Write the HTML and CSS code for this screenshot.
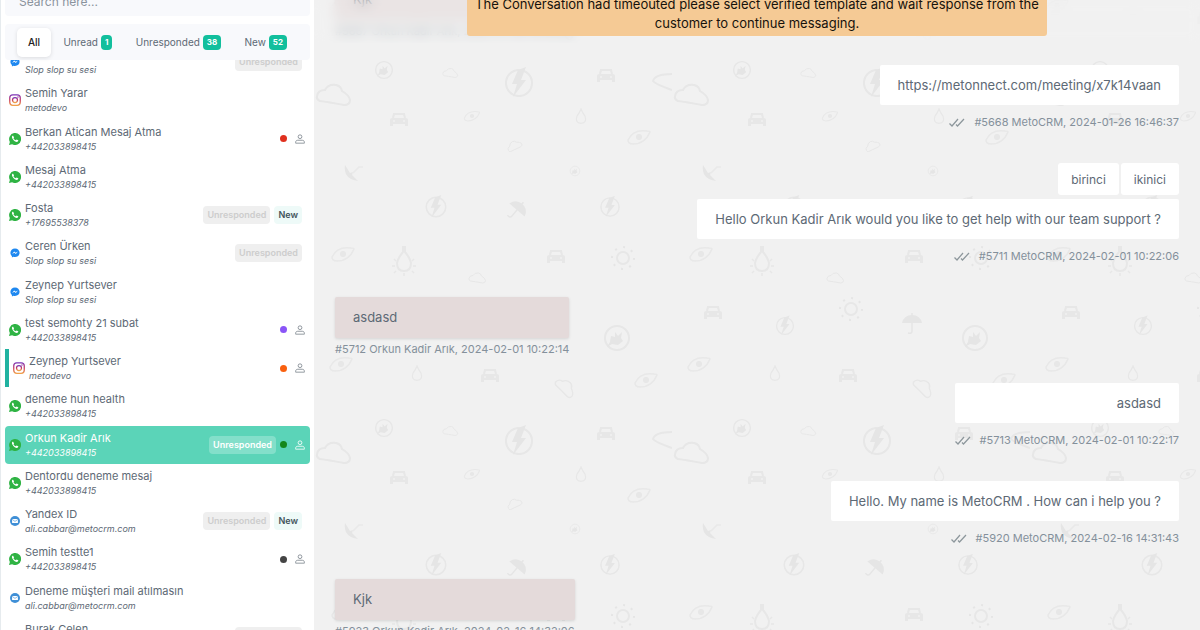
FILE: index.html
```html
<!DOCTYPE html>
<html lang="en">
<head>
  <meta charset="UTF-8">
  <meta name="viewport" content="width=device-width, initial-scale=1">
  <title>MetoCRM</title>
  <link rel="stylesheet" href="styles.css">
</head>
<body>

  <!-- Shared icons -->
  <svg class="sprite" aria-hidden="true">
    <defs>
      <linearGradient id="igFill" x1="0" y1="0" x2="0" y2="1">
        <stop offset="0" stop-color="#7b35b8"/>
        <stop offset="0.5" stop-color="#c8385f"/>
        <stop offset="1" stop-color="#f0a04b"/>
      </linearGradient>
      <symbol id="whatsapp" viewBox="0 0 24 24">
        <path d="M0 24l1.700-6.200A12 12 0 1 1 6.200 22.400z" fill="#2fb344"/>
        <path d="M8.300 5.700c-.5-.5-1.400-.3-1.800.1-3.400 3.800 6.700 15 11.200 11.200.9-.7 1-1.600.9-2.300l-3.500-1.700-1.600 1.700c-2.200-.8-3.700-2.300-4.600-4.200l1.200-1.500z" fill="#fff"/>
      </symbol>
      <symbol id="messenger" viewBox="0 0 24 24">
        <path d="M12 1C5.500 1 1 5.600 1 11.600c0 3.200 1.300 5.900 3.600 7.800V23l3.400-1.900c1.200.4 2.600.5 4 .5 6.500 0 11-4.400 11-10S18.500 1 12 1z" fill="#1e88f0"/>
        <path d="M5 14.500l5-6 3.500 3L19 8.500l-5 6-3.500-3z" fill="#fff"/>
      </symbol>
      <symbol id="instagram" viewBox="0 0 24 24">
        <g fill="none" stroke="url(#igFill)" stroke-width="2.500">
          <rect x="1.500" y="1.500" width="21" height="21" rx="6"/>
          <circle cx="12" cy="12" r="5"/>
        </g>
        <circle cx="18" cy="6" r="1.500" fill="#9a3aa0"/>
      </symbol>
      <symbol id="mail" viewBox="0 0 24 24">
        <circle cx="12" cy="12" r="12" fill="#3f8fd6"/>
        <rect x="5" y="7" width="14" height="10" rx="1" fill="#fff"/>
        <path d="M5 8l7 5 7-5" fill="none" stroke="#3f8fd6" stroke-width="1.500"/>
      </symbol>
      <symbol id="user" viewBox="0 0 24 24">
        <g fill="none" stroke="currentColor" stroke-width="2">
          <circle cx="12" cy="6.500" r="4.500"/>
          <path d="M1.500 22v-2c0-3 2-5 5-5h11c3 0 5 2 5 5v2z"/>
        </g>
      </symbol>
      <symbol id="checks" viewBox="0 0 32 18">
        <path d="M1 11l5 5L18 2M14 13l3 3L30 2" fill="none" stroke="currentColor" stroke-width="2.500"/>
      </symbol>

      <!-- Wallpaper shapes, centred on 0,0 -->
      <g id="car">
        <path d="M-6-2l1-4h10l1 4" fill="none" stroke="#e3e3e3" stroke-width="2"/>
        <path d="M-9 0q0-2 3-2H6q3 0 3 2v6H6V4H-6v2h-3z" fill="#e3e3e3"/>
        <path d="M-6 1h2M4 1h2" stroke="#f1f1f1" stroke-width="1.500"/>
      </g>
      <g id="eye">
        <path d="M-11 3Q-6-8 8-6q3 0 3 1Q6 7-6 7q-5 0-5-4z" fill="none" stroke="#e5e5e5" stroke-width="1.500"/>
        <circle r="3" fill="#e3e3e3"/>
      </g>
      <g id="cloud">
        <path d="M-16 1Q-15-5-8-5-5-11 3-10q5 1 6 6 7 4 8 9 0 5-6 5-16-3-24-4-4-2-3-5z" fill="none" stroke="#e3e3e3" stroke-width="2"/>
      </g>
      <g id="bolt">
        <circle r="13" fill="none" stroke="#e3e3e3" stroke-width="2"/>
        <path d="M7-16L-1-13-7 1h5l-4 13L7-3H2z" fill="#e1e1e1"/>
      </g>
      <g id="plug">
        <circle r="12" fill="none" stroke="#e3e3e3" stroke-width="2"/>
        <path d="M-6-2l4 1v-5l3 4 4-4-1 6 2 3-5 4-6-1-5 3 3-5z" fill="#e1e1e1"/>
      </g>
      <g id="sun">
        <circle r="6" fill="none" stroke="#e4e4e4" stroke-width="2"/>
        <circle r="11" fill="none" stroke="#e1e1e1" stroke-width="2" stroke-dasharray="2 6.600"/>
      </g>
      <g id="drop">
        <path d="M0-10q2 5 5 9 3 8-5 9-8-1-5-9 3-4 5-9z" fill="none" stroke="#e4e4e4" stroke-width="1.500"/>
      </g>
      <g id="lamp">
        <path d="M-1-15h2v5q5 6 6 11 0 8-7 8-7 0-7-8 1-5 6-11z" fill="none" stroke="#e4e4e4" stroke-width="2"/>
        <path d="M-12 4h3M9 4h3M-10 11l2-2M10 11l-2-2M0 11v3M-10-3l2 2M10-3l-2 2" stroke="#e4e4e4" stroke-width="1.500"/>
      </g>
      <g id="umbrella">
        <path d="M-10 0Q-8-8 0-8t10 8z" fill="#e1e1e1"/>
        <path d="M0-10V8q0 3-4 2" fill="none" stroke="#e1e1e1" stroke-width="1.500"/>
      </g>
      <g id="dish">
        <path d="M-8-8Q-10 6 5 8L-1 2 0-1-3 0z" fill="#e1e1e1"/>
        <path d="M0 0l6-6 4 0" fill="none" stroke="#e6e6e6" stroke-width="1.500"/>
      </g>

      <pattern id="doodles" width="358" height="358" patternUnits="userSpaceOnUse" y="43">
        <use href="#plug" transform="translate(70 27) scale(.7)"/>
        <use href="#cloud" transform="translate(136 30) scale(.45)"/>
        <use href="#bolt" transform="translate(205 40)"/>
        <use href="#car" transform="translate(292 33)"/>
        <path d="M358 31q-17 0-19 7 2 3 19 9" fill="none" stroke="#e4e4e4" stroke-width="2"/>
        <use href="#cloud" transform="translate(19 52)"/>
        <use href="#car" transform="translate(85 77)"/>
        <use href="#eye" transform="translate(158 73) scale(.7)"/>
        <use href="#drop" transform="translate(267 74) scale(.8)"/>
        <use href="#eye" transform="translate(325 94)"/>
        <use href="#cloud" transform="translate(200 103) rotate(-35) scale(.45)"/>
        <use href="#dish" transform="translate(39 130)"/>
        <use href="#plug" transform="translate(261 128) scale(.4)"/>
        <use href="#bolt" transform="translate(122 164) scale(.75)"/>
        <use href="#umbrella" transform="translate(203 167) rotate(40)"/>
        <use href="#bolt" transform="translate(296 164) scale(.7)"/>
        <use href="#eye" transform="translate(29 211)"/>
        <use href="#lamp" transform="translate(90 219)"/>
        <use href="#car" transform="translate(242 214)"/>
        <use href="#sun" transform="translate(309 215)"/>
        <use href="#cloud" transform="translate(163 235) scale(.5)"/>
        <use href="#car" transform="translate(41 270)"/>
        <use href="#sun" transform="translate(179 266)"/>
        <use href="#bolt" transform="translate(113 283) scale(.65)"/>
        <use href="#umbrella" transform="translate(240 280)"/>
        <use href="#plug" transform="translate(303 295)"/>
        <use href="#eye" transform="translate(27 321)"/>
        <use href="#drop" transform="translate(103 331) scale(.8)"/>
        <use href="#car" transform="translate(176 333)"/>
        <use href="#cloud" transform="translate(251 344) rotate(35) scale(.65)"/>
        <use href="#eye" transform="translate(332 337)"/>
      </pattern>
    </defs>
  </svg>

  <div class="app">
    <aside class="sidebar">
      <input class="search" type="search" placeholder="Search here..." aria-label="Search">

      <nav class="tabs">
        <button class="tab active" type="button">All</button>
        <button class="tab" type="button">Unread <span class="count">1</span></button>
        <button class="tab" type="button">Unresponded <span class="count">38</span></button>
        <button class="tab" type="button">New <span class="count">52</span></button>
      </nav>

      <div class="list-wrap">
        <ul class="contacts">
          <li><a class="contact" href="#">
            <svg class="channel small"><use href="#messenger"/></svg>
            <span class="who"><span class="name">&nbsp;</span><em>Slop slop su sesi</em></span>
            <span class="tag">Unresponded</span>
          </a></li>
          <li><a class="contact" href="#">
            <svg class="channel"><use href="#instagram"/></svg>
            <span class="who"><span class="name">Semih Yarar</span><em>metodevo</em></span>
          </a></li>
          <li><a class="contact" href="#">
            <svg class="channel"><use href="#whatsapp"/></svg>
            <span class="who"><span class="name">Berkan Atican Mesaj Atma</span><em>+442033898415</em></span>
            <span class="dot red"></span><svg class="user"><use href="#user"/></svg>
          </a></li>
          <li><a class="contact" href="#">
            <svg class="channel"><use href="#whatsapp"/></svg>
            <span class="who"><span class="name">Mesaj Atma</span><em>+442033898415</em></span>
          </a></li>
          <li><a class="contact" href="#">
            <svg class="channel"><use href="#whatsapp"/></svg>
            <span class="who"><span class="name">Fosta</span><em>+17695538378</em></span>
            <span class="tag">Unresponded</span><span class="tag new">New</span>
          </a></li>
          <li><a class="contact" href="#">
            <svg class="channel small"><use href="#messenger"/></svg>
            <span class="who"><span class="name">Ceren Ürken</span><em>Slop slop su sesi</em></span>
            <span class="tag">Unresponded</span>
          </a></li>
          <li><a class="contact" href="#">
            <svg class="channel small"><use href="#messenger"/></svg>
            <span class="who"><span class="name">Zeynep Yurtsever</span><em>Slop slop su sesi</em></span>
          </a></li>
          <li><a class="contact" href="#">
            <svg class="channel"><use href="#whatsapp"/></svg>
            <span class="who"><span class="name">test semohty 21 subat</span><em>+442033898415</em></span>
            <span class="dot purple"></span><svg class="user"><use href="#user"/></svg>
          </a></li>
          <li><a class="contact marked" href="#">
            <svg class="channel"><use href="#instagram"/></svg>
            <span class="who"><span class="name">Zeynep Yurtsever</span><em>metodevo</em></span>
            <span class="dot orange"></span><svg class="user"><use href="#user"/></svg>
          </a></li>
          <li><a class="contact" href="#">
            <svg class="channel"><use href="#whatsapp"/></svg>
            <span class="who"><span class="name">deneme hun health</span><em>+442033898415</em></span>
          </a></li>
          <li><a class="contact selected" href="#">
            <svg class="channel"><use href="#whatsapp"/></svg>
            <span class="who"><span class="name">Orkun Kadir Arık</span><em>+442033898415</em></span>
            <span class="tag">Unresponded</span><span class="dot green"></span><svg class="user"><use href="#user"/></svg>
          </a></li>
          <li><a class="contact" href="#">
            <svg class="channel"><use href="#whatsapp"/></svg>
            <span class="who"><span class="name">Dentordu deneme mesaj</span><em>+442033898415</em></span>
          </a></li>
          <li><a class="contact" href="#">
            <svg class="channel small"><use href="#mail"/></svg>
            <span class="who"><span class="name">Yandex ID</span><em>ali.cabbar@metocrm.com</em></span>
            <span class="tag">Unresponded</span><span class="tag new">New</span>
          </a></li>
          <li><a class="contact" href="#">
            <svg class="channel"><use href="#whatsapp"/></svg>
            <span class="who"><span class="name">Semih testte1</span><em>+442033898415</em></span>
            <span class="dot black"></span><svg class="user"><use href="#user"/></svg>
          </a></li>
          <li><a class="contact" href="#">
            <svg class="channel small"><use href="#mail"/></svg>
            <span class="who"><span class="name">Deneme müşteri mail atılmasın</span><em>ali.cabbar@metocrm.com</em></span>
          </a></li>
          <li><a class="contact" href="#">
            <span class="channel"></span>
            <span class="who"><span class="name">Burak Celen</span><em>&nbsp;</em></span>
            <span class="tag">Unresponded</span>
          </a></li>
        </ul>
      </div>
    </aside>

    <main class="chat">
      <svg class="wallpaper" aria-hidden="true"><rect width="100%" height="100%" fill="url(#doodles)"/></svg>

      <div class="messages">
        <div class="message in">
          <p class="bubble">Kjk</p>
          <p class="meta">#5667 Orkun Kadir Arık, 2024-01-26 16:46:06</p>
        </div>
        <div class="message out">
          <p class="bubble">https://metonnect.com/meeting/x7k14vaan</p>
          <p class="meta"><svg class="checks"><use href="#checks"/></svg>#5668 MetoCRM, 2024-01-26 16:46:37</p>
        </div>
        <div class="message out">
          <div class="replies">
            <button type="button">birinci</button>
            <button type="button">ikinici</button>
          </div>
          <p class="bubble">Hello Orkun Kadir Arık would you like to get help with our team support ?</p>
          <p class="meta"><svg class="checks"><use href="#checks"/></svg>#5711 MetoCRM, 2024-02-01 10:22:06</p>
        </div>
        <div class="message in">
          <p class="bubble">asdasd</p>
          <p class="meta">#5712 Orkun Kadir Arık, 2024-02-01 10:22:14</p>
        </div>
        <div class="message out">
          <p class="bubble">asdasd</p>
          <p class="meta"><svg class="checks"><use href="#checks"/></svg>#5713 MetoCRM, 2024-02-01 10:22:17</p>
        </div>
        <div class="message out">
          <p class="bubble">Hello. My name is MetoCRM . How can i help you ?</p>
          <p class="meta"><svg class="checks"><use href="#checks"/></svg>#5920 MetoCRM, 2024-02-16 14:31:43</p>
        </div>
        <div class="message in">
          <p class="bubble">Kjk</p>
          <p class="meta">#5923 Orkun Kadir Arık, 2024-02-16 14:32:06</p>
        </div>
      </div>

      <div class="topbar"></div>
    </main>
  </div>

  <div class="toast" role="alert">The Conversation had timeouted please select verified template and wait response from the customer to continue messaging.</div>

</body>
</html>
```
FILE: styles.css
```css
* {
  box-sizing: border-box;
}

body {
  margin: 0;
  font-family: Inter, "Liberation Sans", sans-serif;
  font-size: 13px;
  color: #5d6975;
  background-color: #fff;
}

button, input {
  font-family: inherit;
  border: none;
}

.sprite {
  position: absolute;
  width: 0;
  height: 0;
}

.app {
  display: flex;
  height: 100vh;
  overflow: hidden;
}

/* Sidebar */
.sidebar {
  display: flex;
  flex-direction: column;
  width: 314px;
  flex-shrink: 0;
  padding: 0 4px;
  border-left: 1px solid #e6ebee;
  background-color: #fff;
}

.search {
  height: 32px;
  flex-shrink: 0;
  margin: -16px 0 8px;
  padding: 2px 14px 0;
  border-radius: 4px;
  background-color: #f8f9fc;
  font-size: 12px;
}

.search::placeholder {
  color: #8a939d;
}

.tabs {
  display: flex;
  justify-content: space-between;
  align-items: center;
  flex-shrink: 0;
  height: 36px;
  padding: 0 12px;
  border-radius: 4px;
  background-color: #f8f9fc;
}

.tab {
  display: flex;
  align-items: center;
  gap: 3px;
  height: 29px;
  padding: 0 11px;
  border-radius: 5px;
  background: none;
  font-size: 10px;
  color: #5d6975;
  cursor: pointer;
}

.tab.active {
  background-color: #fff;
  color: #222;
  font-weight: 500;
  box-shadow: 0 1px 4px rgba(0, 0, 0, 0.12);
}

.count {
  padding: 0 4px;
  border-radius: 4px;
  background-color: #12bf9d;
  color: #fff;
  font-size: 8px;
  font-weight: 700;
  line-height: 15px;
}

.list-wrap {
  display: flex;
  flex: 1;
  min-height: 0;
  overflow: hidden;
}

/* The list is scrolled a little, so its first row is cut at the top */
.contacts {
  display: grid;
  grid-auto-rows: 1fr;
  flex: 1;
  list-style: none;
  margin: -17px 0 -25px;
  padding: 0;
}

.contact {
  display: flex;
  align-items: center;
  height: 100%;
  padding: 0 8px 0 4px;
  color: #5d6975;
  text-decoration: none;
}

.contact.marked {
  border-left: 4px solid #20b2a0;
}

.contact.selected {
  border-radius: 4px;
  background-color: #5bd4b8;
  color: #fff;
}

.channel {
  width: 12px;
  height: 12px;
  flex-shrink: 0;
}

.channel.small {
  width: 10px;
  height: 10px;
  margin: 0 1px;
}

.who {
  display: flex;
  flex-direction: column;
  flex: 1;
  margin-left: 4px;
}

.name {
  font-size: 11px;
  line-height: 15px;
}

.who em {
  font-size: 9px;
  line-height: 13px;
}

.tag {
  margin-left: 4px;
  padding: 0 4px;
  border-radius: 4px;
  background-color: #efefef;
  color: #cdcdcd;
  font-size: 9px;
  font-weight: 600;
  line-height: 18px;
}

.tag.new {
  background-color: #eefaf8;
  color: #43545c;
}

.selected .tag {
  background-color: #83dfca;
  color: #fff;
}

.dot {
  width: 7px;
  height: 7px;
  margin: 0 8px 0 4px;
  border-radius: 50%;
}

.red { background-color: #e0301e; }
.purple { background-color: #8a55f7; }
.orange { background-color: #f9600f; }
.green { background-color: #14871c; }
.black { background-color: #444; }

.user {
  width: 10px;
  height: 10px;
  margin-right: -3px;
  color: #7d868e;
}

.selected .user {
  color: #fff;
}

/* Chat */
.chat {
  display: grid;
  flex: 1;
  min-width: 0;
  overflow: hidden;
  background-color: #f1f1f1;
}

.wallpaper, .messages, .topbar {
  grid-area: 1 / 1;
}

.wallpaper {
  width: 100%;
  height: 100vh;
  opacity: 0.7;
}

.messages {
  display: flex;
  flex-direction: column;
  z-index: 1;
  margin-top: -21px;
  padding: 0 21px;
}

.topbar {
  z-index: 2;
  height: 43px;
  background-color: rgba(243, 243, 243, 0.4);
  backdrop-filter: blur(6px);
}

.message {
  display: flex;
  flex-direction: column;
}

.message p {
  margin: 0;
}

.in {
  align-self: flex-start;
  margin-bottom: 25px;
}

.out {
  align-self: flex-end;
  align-items: flex-end;
  margin-bottom: 32px;
}

.bubble {
  padding: 0 18px;
  border-radius: 2px;
  background-color: #fff;
  font-size: 13px;
  line-height: 40px;
}

.in .bubble {
  background-color: #e4dada;
  line-height: 41px;
  box-shadow: 0 1px 3px rgba(0, 0, 0, 0.12);
}

.out .bubble {
  align-self: stretch;
  text-align: right;
}

.meta {
  display: flex;
  align-items: center;
  font-size: 11px;
  line-height: 17px;
  color: #84909b;
}

.in .meta {
  padding-top: 3px;
}

.out .meta {
  padding-top: 9px;
}

.checks {
  width: 16px;
  height: 9px;
  margin-right: 9px;
  color: #8d979c;
}

.replies {
  display: flex;
  gap: 2px;
  margin-bottom: 4px;
}

.replies button {
  height: 32px;
  padding: 0 13px;
  border-radius: 3px;
  background-color: #fff;
  color: #5d6975;
  font-size: 12px;
}

/* Notice over the chat */
.toast {
  position: absolute;
  z-index: 3;
  bottom: calc(100% - 36px);
  right: 153px;
  width: 580px;
  padding: 16px 6px 3px;
  border-radius: 3px;
  background-color: #f5ca95;
  color: #16120c;
  font-size: 13px;
  line-height: 19px;
  text-align: center;
}
```
